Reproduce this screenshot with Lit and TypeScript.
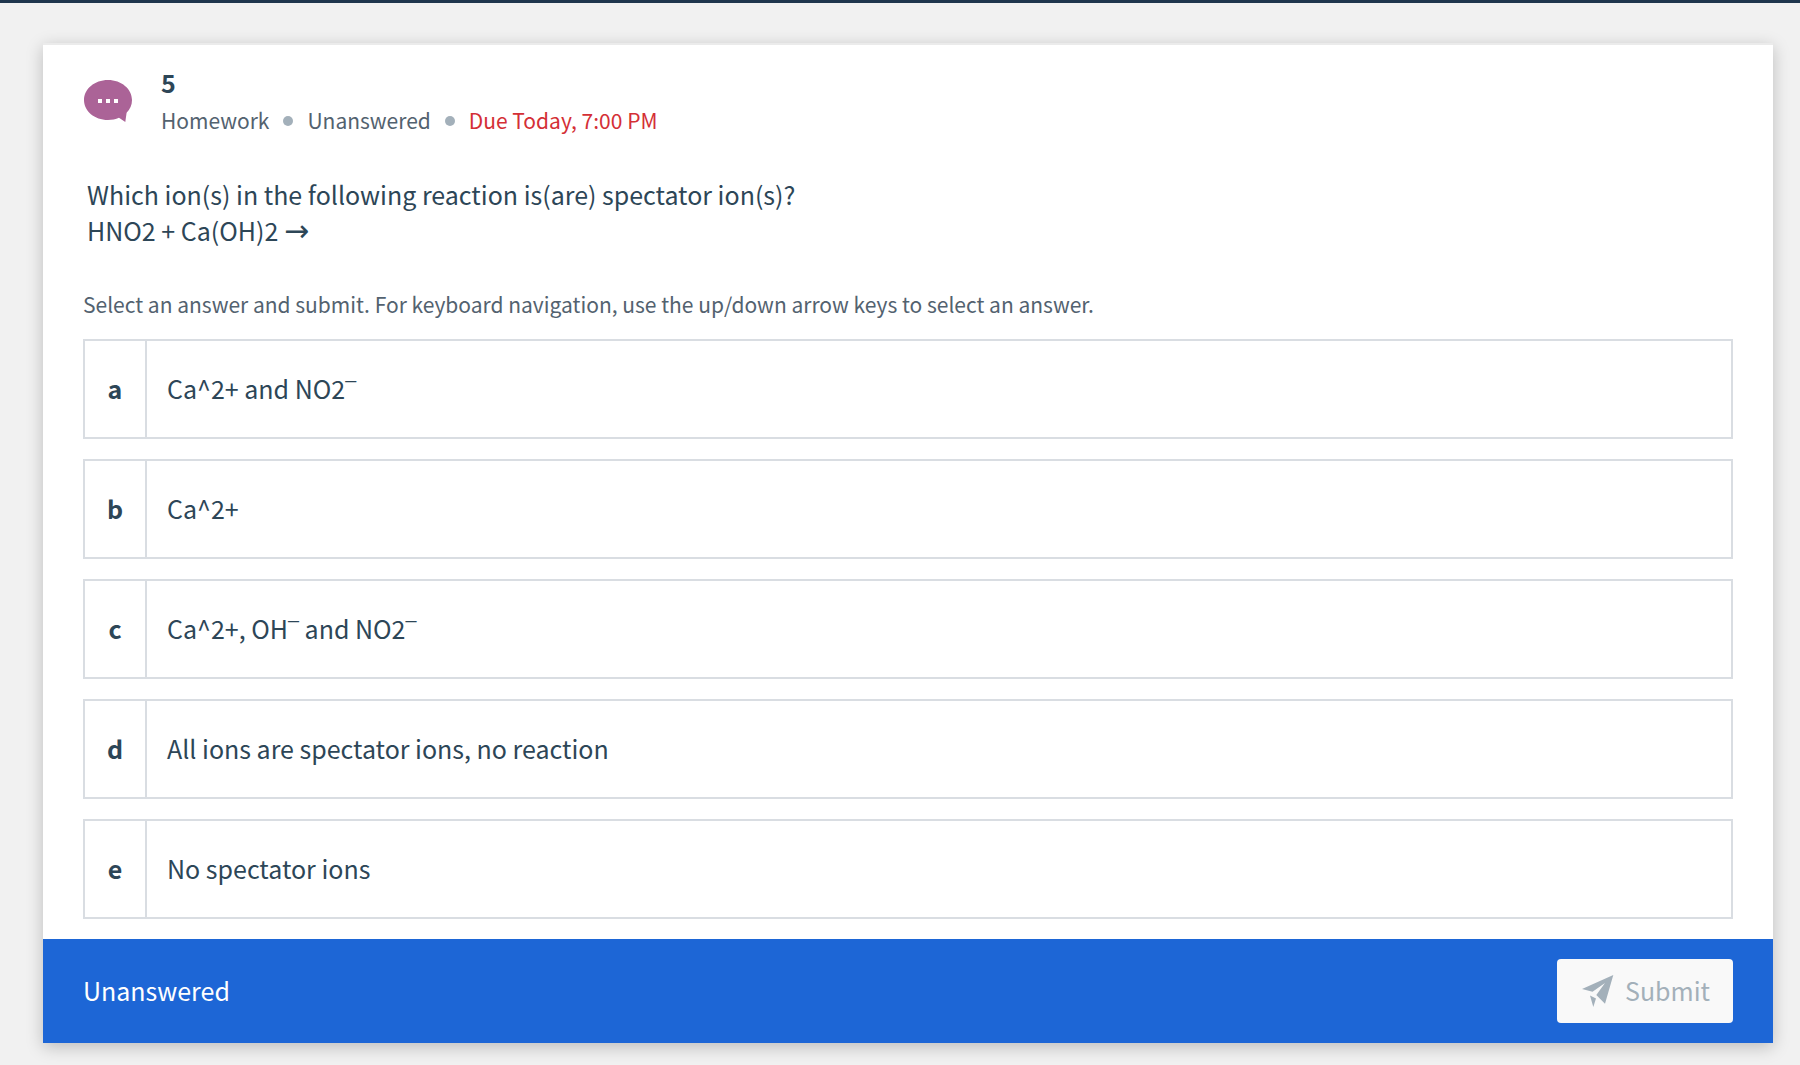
import { LitElement, html, css } from "lit";
import { customElement, property, state } from "lit/decorators.js";

interface Choice {
  key: string;
  text: string;
}

const CHOICES: Choice[] = [
  { key: "a", text: "Ca^2+ and NO2¯" },
  { key: "b", text: "Ca^2+" },
  { key: "c", text: "Ca^2+, OH¯ and NO2¯" },
  { key: "d", text: "All ions are spectator ions, no reaction" },
  { key: "e", text: "No spectator ions" },
];

@customElement("answer-option")
class AnswerOption extends LitElement {
  static styles = css`
    :host {
      display: block;
    }
    .option {
      display: grid;
      grid-template-columns: 60px 1fr;
      min-height: 96px;
      border: 2px solid #d9dde2;
      cursor: pointer;
    }
    .radio {
      grid-area: 1 / 1;
      appearance: none;
      margin: 0;
      cursor: pointer;
    }
    .radio:focus-visible {
      outline: 2px solid #1d66d6;
    }
    .radio:checked {
      background: #dbe8fb;
    }
    .letter {
      grid-area: 1 / 1;
      display: grid;
      place-items: center;
      padding-bottom: 2px;
      font-weight: 700;
      pointer-events: none;
      z-index: 1;
    }
    .text {
      display: flex;
      align-items: center;
      border-left: 2px solid #d9dde2;
      padding: 0 20px 2px;
    }
    .charge {
      font-family: "Noto Sans", "Open Sans", sans-serif;
      font-size: 22px;
      line-height: 1;
    }
  `;

  @property() letter = "";
  @property() text = "";
  @property({ type: Boolean }) selected = false;

  private formula() {
    return this.text
      .split("¯")
      .map((part, i) => (i ? html`<span class="charge">¯</span>${part}` : part));
  }

  render() {
    return html`
      <label class="option">
        <input
          class="radio"
          type="radio"
          name="answer"
          .value=${this.letter}
          .checked=${this.selected}
          @change=${() => this.dispatchEvent(new CustomEvent("pick", { detail: this.letter }))}
        />
        <span class="letter">${this.letter}</span>
        <span class="text"><span>${this.formula()}</span></span>
      </label>
    `;
  }
}

@customElement("app-root")
class AppRoot extends LitElement {
  static styles = css`
    :host {
      display: block;
      box-sizing: border-box;
      min-height: 100vh;
      padding: 40px 27px 22px 43px;
      border-top: 3px solid #1f364d;
      background: #f1f1f1;
      color: #2d4657;
      font-family: "Noto Sans CJK SC", "Open Sans", sans-serif;
      font-size: 25px;
      line-height: 36px;
    }
    .card {
      background: #fff;
      border-top: 2px solid #ebebeb;
      box-shadow: 0 4px 16px rgba(0, 0, 0, 0.22);
    }
    .body {
      padding: 20px 40px 20px;
    }
    .header {
      display: flex;
      gap: 28px;
    }
    .bubble {
      flex: none;
      width: 50px;
      height: 44px;
      margin-top: 14px;
    }
    .title {
      margin: 0;
      font-size: 25px;
      font-weight: 700;
      line-height: 34px;
    }
    .meta {
      display: flex;
      align-items: center;
      gap: 14px;
      margin: 0;
      padding: 0;
      list-style: none;
      font-size: 21px;
      line-height: 42px;
      color: #53626f;
    }
    .dot {
      width: 10px;
      height: 10px;
      margin-top: 2px;
      border-radius: 50%;
      background: #a3b0ba;
    }
    .due {
      color: #d42f36;
    }
    .question {
      margin: 35px 4px 0;
    }
    .arrow {
      font-family: "DejaVu Sans", sans-serif;
      font-size: 30px;
      line-height: 1;
    }
    .choices {
      display: grid;
      gap: 20px;
      margin: 0;
      padding: 0;
      border: 0;
      min-width: 0;
    }
    .hint {
      margin: 38px 0 17px;
      font-size: 21px;
      color: #53626f;
    }
    .footer {
      display: flex;
      align-items: center;
      justify-content: space-between;
      padding: 20px 40px;
      background: #1d66d6;
      color: #fff;
    }
    .status,
    .caption {
      padding-bottom: 2px;
    }
    .submit {
      display: flex;
      align-items: center;
      gap: 11px;
      height: 64px;
      padding: 0 23px 0 25px;
      border: 0;
      border-radius: 4px;
      background: #f9f9f9;
      color: #a3b0ba;
      font: inherit;
    }
    .plane {
      width: 32px;
      height: 32px;
    }
  `;

  @state() private answer = "";

  render() {
    return html`
      <main class="card">
        <div class="body">
          <header class="header">
            <svg class="bubble" viewBox="0 0 50 44" aria-hidden="true">
              <path
                fill="#ab6397"
                d="M25 1C38.500 1 49 10 49 21c0 5-2 9.500-5.400 12.800L42.300 43l-6.300-4.200C32.700 40.300 29 41 25 41 11.500 41 1 32 1 21S11.500 1 25 1z"
              />
              <path fill="#fff" d="M15 20h4v4h-4zM23 20h4v4h-4zM31 20h4v4h-4z" />
            </svg>
            <div>
              <h1 class="title">5</h1>
              <ul class="meta">
                <li>Homework</li>
                <li class="dot" role="presentation"></li>
                <li>Unanswered</li>
                <li class="dot" role="presentation"></li>
                <li class="due">Due Today, 7:00 PM</li>
              </ul>
            </div>
          </header>
          <p class="question">
            Which ion(s) in the following reaction is(are) spectator ion(s)?<br />
            HNO2 + Ca(OH)2 <span class="arrow">→</span>
          </p>
          <p class="hint" id="hint">
            Select an answer and submit. For keyboard navigation, use the up/down arrow keys to select an answer.
          </p>
          <fieldset class="choices" aria-labelledby="hint">
            ${CHOICES.map(
              (c) => html`<answer-option
                .letter=${c.key}
                .text=${c.text}
                .selected=${this.answer === c.key}
                @pick=${(e: CustomEvent<string>) => (this.answer = e.detail)}
              ></answer-option>`
            )}
          </fieldset>
        </div>
        <footer class="footer">
          <span class="status">Unanswered</span>
          <button class="submit" type="button" ?disabled=${!this.answer}>
            <svg class="plane" viewBox="0 0 32 32" fill="currentColor" aria-hidden="true">
              <path d="M31.300 0L0 14l10.500 2.700L23 8 14.300 20 23 28.700z" />
              <path d="M8 20.600l6 3L11.300 32z" />
            </svg>
            <span class="caption">Submit</span>
          </button>
        </footer>
      </main>
    `;
  }
}
